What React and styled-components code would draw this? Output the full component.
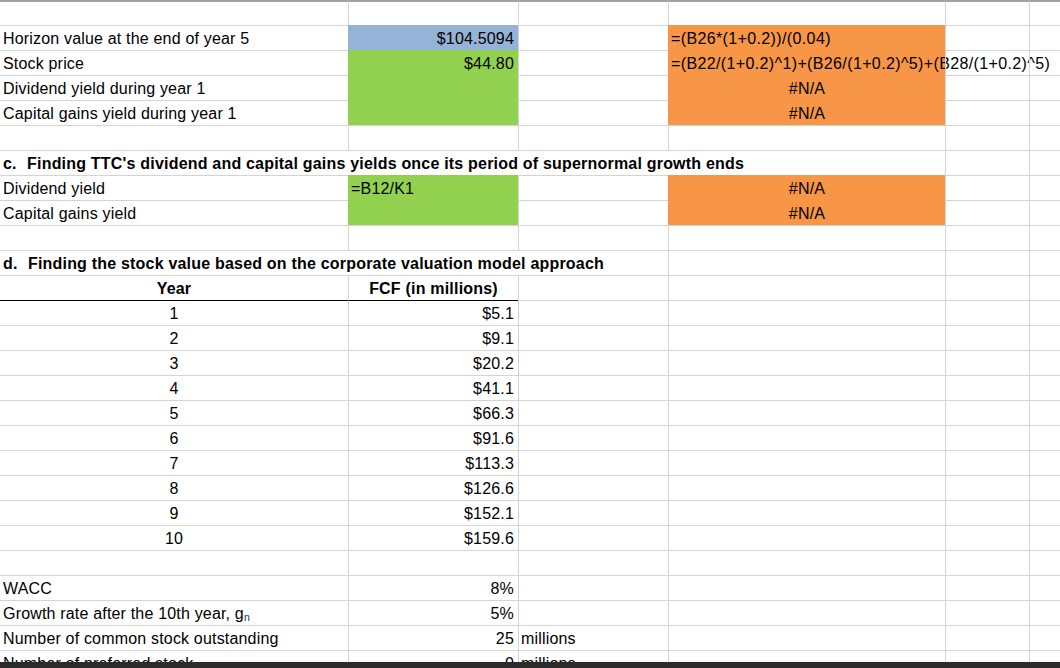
import React from "react";
import styled, { createGlobalStyle } from "styled-components";

const GlobalStyle = createGlobalStyle`
  html, body {
    margin: 0;
    padding: 0;
    background: #fff;
  }
`;

const Page = styled.div`
  position: relative;
  width: 1060px;
  height: 668px;
  overflow: hidden;
  background: #fff;
  color: #000;
  font-family: "Liberation Sans", Arial, sans-serif;
  font-size: 16px;
`;

const Sheet = styled.div`
  display: grid;
  grid-template-columns: 349px 170px 150px 277px 84px 31px;
  grid-auto-rows: 25px;
  margin-left: -1px;
`;

const lineColor = (p) => {
  if (p.$edge) return "#a3a3a3";
  if (p.$heavy) return "#000";
  return p.$fill || "#d4d4d4";
};

const Cell = styled.div`
  box-sizing: border-box;
  grid-column: ${(p) => (p.$span ? `span ${p.$span}` : "auto")};
  display: flex;
  align-items: center;
  justify-content: ${(p) =>
    p.$align === "right" ? "flex-end" : p.$align === "center" ? "center" : "flex-start"};
  padding: 2px ${(p) => (p.$align === "center" ? "2px" : "4px")} 0 ${(p) => (p.$label ? "3px" : "2px")};
  white-space: nowrap;
  font-weight: ${(p) => (p.$bold ? 700 : 400)};
  letter-spacing: ${(p) => (p.$bold ? "0.2px" : p.$wide ? "0.37px" : "0.18px")};
  background: ${(p) => p.$fill || "transparent"};
  border-left: 1px solid ${(p) => p.$fill || "#d4d4d4"};
  border-top: ${(p) => (p.$edge ? 2 : 1)}px solid ${lineColor};
`;

const Marker = styled.span`
  margin-right: 1px;
`;

const Sub = styled.sub`
  font-size: 10.5px;
  line-height: 0;
  color: #12306e;
  vertical-align: -2px;
`;

const TaskBar = styled.div`
  position: absolute;
  left: 0;
  right: 0;
  bottom: 0;
  height: 6px;
  background: #2b2b2b;
`;

const BLUE = "#95b3d7";
const GREEN = "#92d050";
const ORANGE = "#f79646";

const Empty = ({ edge }) => (
  <>
    <Cell $edge={edge} />
    <Cell $edge={edge} />
    <Cell $edge={edge} />
    <Cell $edge={edge} />
    <Cell $edge={edge} />
    <Cell $edge={edge} />
  </>
);

// label, value cell and formula cell of the yield blocks
const ValueRow = ({ label, value, fill, formula, formulaAlign, valueAlign = "right" }) => (
  <>
    <Cell $label>{label}</Cell>
    <Cell $fill={fill} $align={valueAlign}>{value}</Cell>
    <Cell />
    <Cell $fill={ORANGE} $align={formulaAlign} $wide={!formulaAlign}>{formula}</Cell>
    <Cell />
    <Cell />
  </>
);

// the long heading runs over the D column, so that column's line stops there
const Heading = ({ marker, long, children }) => (
  <>
    <Cell $label $span={long ? 4 : 3} $bold>
      <Marker>{marker}&nbsp;&nbsp;</Marker>
      {children}
    </Cell>
    {!long && <Cell />}
    <Cell />
    <Cell />
  </>
);

const YearRow = ({ year, fcf, heavy }) => (
  <>
    <Cell $align="center" $heavy={heavy}>{year}</Cell>
    <Cell $align="right" $heavy={heavy}>{fcf}</Cell>
    <Cell />
    <Cell />
    <Cell />
    <Cell />
  </>
);

const InputRow = ({ label, value, unit }) => (
  <>
    <Cell $label>{label}</Cell>
    <Cell $align="right">{value}</Cell>
    <Cell>{unit}</Cell>
    <Cell />
    <Cell />
    <Cell />
  </>
);

const fcfRows = ["$5.1", "$9.1", "$20.2", "$41.1", "$66.3", "$91.6", "$113.3", "$126.6", "$152.1", "$159.6"];

export default function App() {
  return (
    <Page>
      <GlobalStyle />
      <Sheet>
        <Empty edge />
        <ValueRow label="Horizon value at the end of year 5" value="$104.5094" fill={BLUE} formula="=(B26*(1+0.2))/(0.04)" />
        <ValueRow label="Stock price" value="$44.80" fill={GREEN} formula="=(B22/(1+0.2)^1)+(B26/(1+0.2)^5)+(B28/(1+0.2)^5)" />
        <ValueRow label="Dividend yield during year 1" fill={GREEN} formula="#N/A" formulaAlign="center" />
        <ValueRow label="Capital gains yield during year 1" fill={GREEN} formula="#N/A" formulaAlign="center" />
        <Empty />
        <Heading marker="c." long>Finding TTC's dividend and capital gains yields once its period of supernormal growth ends</Heading>
        <ValueRow label="Dividend yield" value="=B12/K1" valueAlign="left" fill={GREEN} formula="#N/A" formulaAlign="center" />
        <ValueRow label="Capital gains yield" fill={GREEN} formula="#N/A" formulaAlign="center" />
        <Empty />
        <Heading marker="d.">Finding the stock value based on the corporate valuation model approach</Heading>
        <Cell $align="center" $bold>Year</Cell>
        <Cell $align="center" $bold>FCF (in millions)</Cell>
        <Cell />
        <Cell />
        <Cell />
        <Cell />
        {fcfRows.map((fcf, i) => (
          <YearRow key={fcf} year={i + 1} fcf={fcf} heavy={i === 0} />
        ))}
        <Empty />
        <InputRow label="WACC" value="8%" />
        <InputRow label={<span>Growth rate after the 10th year, g<Sub>n</Sub></span>} value="5%" />
        <InputRow label="Number of common stock outstanding" value="25" unit="millions" />
        <InputRow label="Number of preferred stock" value="0" unit="millions" />
      </Sheet>
      <TaskBar />
    </Page>
  );
}
